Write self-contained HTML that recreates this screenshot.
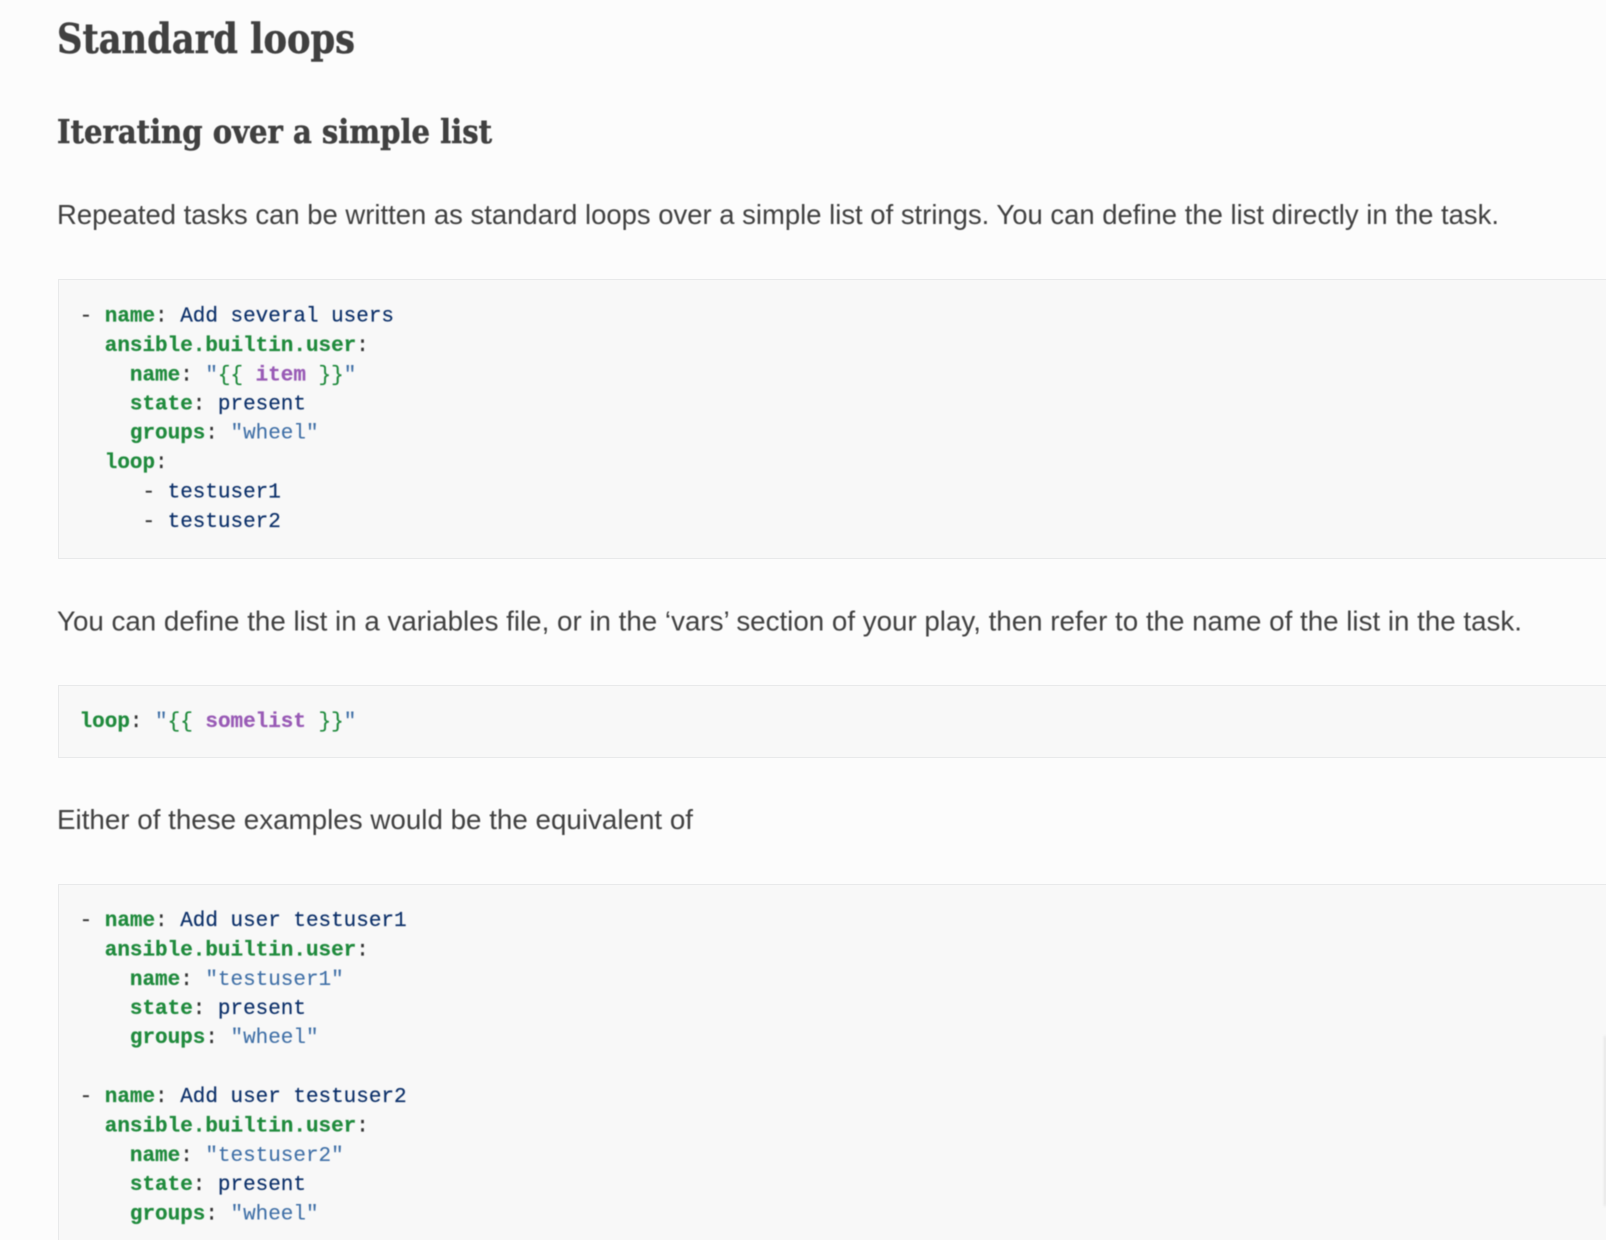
<!DOCTYPE html>
<html lang="en">
<head>
<meta charset="utf-8">
<title>Standard loops</title>
<style>
html,body{margin:0;padding:0;width:1606px;height:1240px;overflow:hidden;background:#fcfcfc}
#w{position:relative;width:1606px;height:1240px;overflow:hidden;background:#fcfcfc}
.box{position:absolute;left:58px;right:0;background:#f8f8f8;border:1px solid #e8e9ea;border-right:none;box-sizing:border-box}
.sh{position:absolute;left:1604px;top:1036px;width:2px;height:170px;background:#e4e4e4;filter:blur(1px)}
svg{position:absolute;left:0;top:0;filter:blur(.4px)}
text{white-space:pre}
.h{font-family:"DejaVu Serif","Liberation Serif",serif;font-weight:700;fill:#404040;stroke:#404040;stroke-width:.5px}
.p{font-family:"Liberation Sans",sans-serif;font-size:27.6px;fill:#404040}
.c{font-family:"Liberation Mono",monospace;font-size:20.96px;fill:#333;stroke:#333;stroke-width:.2px}
.g{fill:#1f8a3c;stroke:#1f8a3c;font-weight:700}
.b{fill:#0c3069;stroke:#0c3069}
.s{fill:#3f6fa6;stroke:#3f6fa6;stroke-width:.1px}
.t{fill:#1f8a3c;stroke:#1f8a3c}
.v{fill:#985ab5;stroke:#985ab5;font-weight:700}
</style>
</head>
<body>
<div id="w">
<div class="box" style="top:279px;height:280px"></div>
<div class="box" style="top:685px;height:73px"></div>
<div class="box" style="top:884px;height:356px;border-bottom:none"></div>
<div class="sh"></div>
<svg width="1606" height="1240" viewBox="0 0 1606 1240" xmlns="http://www.w3.org/2000/svg">
<text class="h" x="57" y="53" font-size="41" textLength="298" lengthAdjust="spacingAndGlyphs">Standard loops</text>
<text class="h" x="57" y="143" font-size="33" textLength="435" lengthAdjust="spacingAndGlyphs">Iterating over a simple list</text>
<text class="p" x="57" y="224" textLength="1442" lengthAdjust="spacingAndGlyphs">Repeated tasks can be written as standard loops over a simple list of strings. You can define the list directly in the task.</text>
<text class="p" x="57" y="630.3" textLength="1465" lengthAdjust="spacingAndGlyphs">You can define the list in a variables file, or in the ‘vars’ section of your play, then refer to the name of the list in the task.</text>
<text class="p" x="57" y="829.1" textLength="636" lengthAdjust="spacingAndGlyphs">Either of these examples would be the equivalent of</text>
<g transform="translate(-.4,.9)">
<text class="c" y="320.7" x="80">- <tspan class="g">name</tspan>: <tspan class="b">Add several users</tspan></text>
<text class="c" y="350" x="80">  <tspan class="g">ansible.builtin.user</tspan>:</text>
<text class="c" y="379.4" x="80">    <tspan class="g">name</tspan>: <tspan class="s">"</tspan><tspan class="t">{{ </tspan><tspan class="v">item</tspan><tspan class="t"> }}</tspan><tspan class="s">"</tspan></text>
<text class="c" y="408.4" x="80">    <tspan class="g">state</tspan>: <tspan class="b">present</tspan></text>
<text class="c" y="437.7" x="80">    <tspan class="g">groups</tspan>: <tspan class="s">"wheel"</tspan></text>
<text class="c" y="466.9" x="80">  <tspan class="g">loop</tspan>:</text>
<text class="c" y="496.7" x="80">     - <tspan class="b">testuser1</tspan></text>
<text class="c" y="526" x="80">     - <tspan class="b">testuser2</tspan></text>
<text class="c" y="726.3" x="80"><tspan class="g">loop</tspan>: <tspan class="s">"</tspan><tspan class="t">{{ </tspan><tspan class="v">somelist</tspan><tspan class="t"> }}</tspan><tspan class="s">"</tspan></text>
<text class="c" y="925" x="80">- <tspan class="g">name</tspan>: <tspan class="b">Add user testuser1</tspan></text>
<text class="c" y="954.5" x="80">  <tspan class="g">ansible.builtin.user</tspan>:</text>
<text class="c" y="983.9" x="80">    <tspan class="g">name</tspan>: <tspan class="s">"testuser1"</tspan></text>
<text class="c" y="1012.9" x="80">    <tspan class="g">state</tspan>: <tspan class="b">present</tspan></text>
<text class="c" y="1042.2" x="80">    <tspan class="g">groups</tspan>: <tspan class="s">"wheel"</tspan></text>
<text class="c" y="1101" x="80">- <tspan class="g">name</tspan>: <tspan class="b">Add user testuser2</tspan></text>
<text class="c" y="1130.4" x="80">  <tspan class="g">ansible.builtin.user</tspan>:</text>
<text class="c" y="1160.2" x="80">    <tspan class="g">name</tspan>: <tspan class="s">"testuser2"</tspan></text>
<text class="c" y="1189.2" x="80">    <tspan class="g">state</tspan>: <tspan class="b">present</tspan></text>
<text class="c" y="1218.7" x="80">    <tspan class="g">groups</tspan>: <tspan class="s">"wheel"</tspan></text>
</g>
</svg>
</div>
</body>
</html>
